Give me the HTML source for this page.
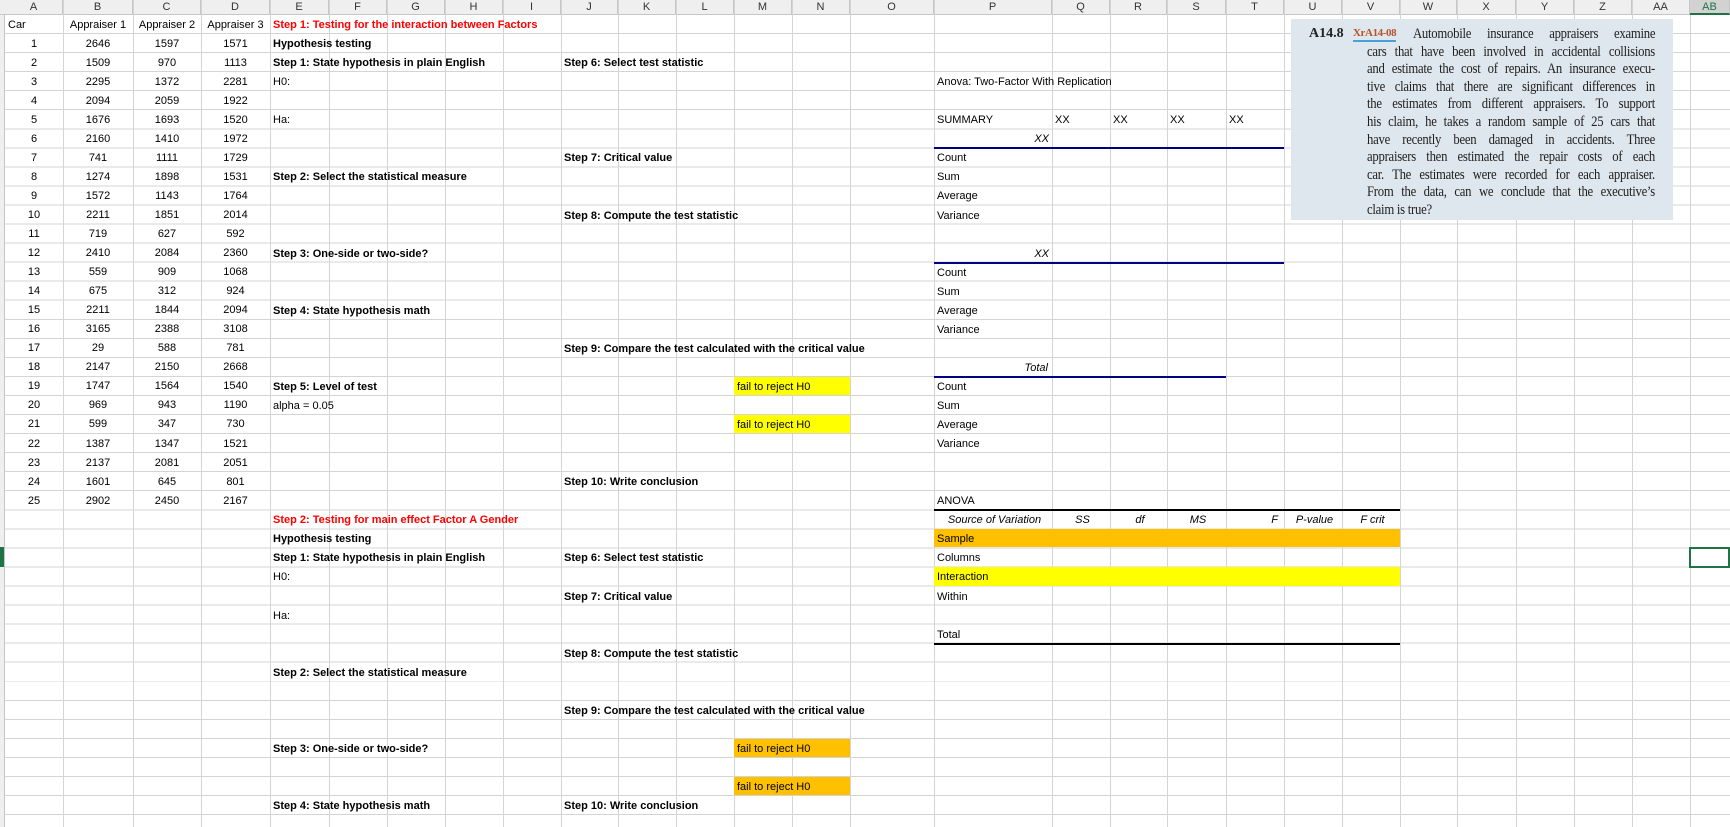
<!DOCTYPE html>
<html><head><meta charset="utf-8"><style>
*{margin:0;padding:0;box-sizing:border-box}
body{width:1730px;height:827px;overflow:hidden;background:#fff;position:relative;font-family:"Liberation Sans",sans-serif;font-size:11px;color:#000}
.hl{position:absolute;left:0;width:1730px;top:15px;height:812px;background:repeating-linear-gradient(to bottom,transparent 0,transparent 18.05px,#d4d4d4 18.05px,#d4d4d4 19.05px)}
.v{position:absolute;top:0;width:1px;height:827px;background:#d4d4d4}
.hdr{position:absolute;top:0;left:0;width:1730px;height:15px;background:#efefef;border-bottom:1px solid #c6c6c6}
.h{position:absolute;top:0;height:15px;line-height:15px;text-align:center;font-size:11px;color:#333;border-right:1px solid #c6c6c6}
.c{position:absolute;height:19px;line-height:20px;padding-left:3px;white-space:nowrap;font-size:11px}
.b{font-weight:bold}
.r{color:#f00;font-weight:bold}
.n{position:absolute;height:19px;line-height:20px;text-align:center;font-size:11px}
.y{background:#ff0}
.o{background:#ffc000}
.i{font-style:italic}
.box{position:absolute;left:1291px;top:19px;width:382px;height:201px;background:#dfe7ee;font-family:"Liberation Serif",serif;font-size:15px;color:#222}
.ln{position:absolute;left:76px;width:340px;height:18px;line-height:18px;text-align:justify;text-align-last:justify;white-space:nowrap;letter-spacing:-0.3px;transform:scaleX(0.847);transform-origin:0 0}
</style></head><body>
<div class="hl"></div>
<div class="hdr"></div>
<div style="position:absolute;left:0;top:15px;width:5px;height:812px;background:#efefef;border-right:1px solid #c6c6c6"></div>
<div class="v" style="left:63px"></div><div class="v" style="left:133px"></div><div class="v" style="left:201px"></div><div class="v" style="left:270px"></div><div class="v" style="left:329px"></div><div class="v" style="left:387px"></div><div class="v" style="left:445px"></div><div class="v" style="left:503px"></div><div class="v" style="left:561px"></div><div class="v" style="left:618px"></div><div class="v" style="left:676px"></div><div class="v" style="left:734px"></div><div class="v" style="left:792px"></div><div class="v" style="left:850px"></div><div class="v" style="left:934px"></div><div class="v" style="left:1052px"></div><div class="v" style="left:1110px"></div><div class="v" style="left:1167px"></div><div class="v" style="left:1226px"></div><div class="v" style="left:1284px"></div><div class="v" style="left:1342px"></div><div class="v" style="left:1400px"></div><div class="v" style="left:1457px"></div><div class="v" style="left:1516px"></div><div class="v" style="left:1574px"></div><div class="v" style="left:1632px"></div><div class="v" style="left:1690px"></div>
<div class="h" style="left:5px;width:58px">A</div><div class="h" style="left:63px;width:70px">B</div><div class="h" style="left:133px;width:68px">C</div><div class="h" style="left:201px;width:69px">D</div><div class="h" style="left:270px;width:59px">E</div><div class="h" style="left:329px;width:58px">F</div><div class="h" style="left:387px;width:58px">G</div><div class="h" style="left:445px;width:58px">H</div><div class="h" style="left:503px;width:58px">I</div><div class="h" style="left:561px;width:57px">J</div><div class="h" style="left:618px;width:58px">K</div><div class="h" style="left:676px;width:58px">L</div><div class="h" style="left:734px;width:58px">M</div><div class="h" style="left:792px;width:58px">N</div><div class="h" style="left:850px;width:84px">O</div><div class="h" style="left:934px;width:118px">P</div><div class="h" style="left:1052px;width:58px">Q</div><div class="h" style="left:1110px;width:57px">R</div><div class="h" style="left:1167px;width:59px">S</div><div class="h" style="left:1226px;width:58px">T</div><div class="h" style="left:1284px;width:58px">U</div><div class="h" style="left:1342px;width:58px">V</div><div class="h" style="left:1400px;width:57px">W</div><div class="h" style="left:1457px;width:59px">X</div><div class="h" style="left:1516px;width:58px">Y</div><div class="h" style="left:1574px;width:58px">Z</div><div class="h" style="left:1632px;width:58px">AA</div><div class="h" style="left:1690px;width:40px;background:#d2d2d2;border-bottom:2px solid #217346;color:#217346">AB</div>

<div class="y" style="position:absolute;left:734px;top:377px;width:116px;height:18px"></div>
<div class="y" style="position:absolute;left:734px;top:415px;width:116px;height:18px"></div>
<div class="o" style="position:absolute;left:734px;top:739px;width:116px;height:18px"></div>
<div class="o" style="position:absolute;left:734px;top:777px;width:116px;height:18px"></div>
<div class="o" style="position:absolute;left:934px;top:529px;width:466px;height:18px"></div>
<div class="y" style="position:absolute;left:934px;top:567px;width:466px;height:19px"></div>

<div style="position:absolute;left:934px;top:147px;width:350px;height:2px;background:#000080"></div>
<div style="position:absolute;left:934px;top:262px;width:350px;height:2px;background:#000080"></div>
<div style="position:absolute;left:934px;top:376px;width:292px;height:2px;background:#000080"></div>
<div style="position:absolute;left:934px;top:509px;width:466px;height:2px;background:#000"></div>
<div style="position:absolute;left:934px;top:643px;width:466px;height:2px;background:#000"></div>
<div style="position:absolute;left:1689px;top:547px;width:41px;height:21px;border:2px solid #217346"></div>
<div style="position:absolute;left:0;top:547px;width:4px;height:20px;background:#217346"></div>

<div class="c" style="left:5px;top:15px">Car</div>
<div class="n" style="left:63px;top:15px;width:70px">Appraiser 1</div>
<div class="n" style="left:133px;top:15px;width:68px">Appraiser 2</div>
<div class="n" style="left:201px;top:15px;width:69px">Appraiser 3</div>
<div style="position:absolute;left:5px;top:34px">
<table style="border-collapse:collapse;font-size:11px;text-align:center">
<colgroup><col style="width:58px"><col style="width:70px"><col style="width:68px"><col style="width:69px"></colgroup>
<tr style="height:19.05px"><td>1</td><td>2646</td><td>1597</td><td>1571</td></tr>
<tr style="height:19.05px"><td>2</td><td>1509</td><td>970</td><td>1113</td></tr>
<tr style="height:19.05px"><td>3</td><td>2295</td><td>1372</td><td>2281</td></tr>
<tr style="height:19.05px"><td>4</td><td>2094</td><td>2059</td><td>1922</td></tr>
<tr style="height:19.05px"><td>5</td><td>1676</td><td>1693</td><td>1520</td></tr>
<tr style="height:19.05px"><td>6</td><td>2160</td><td>1410</td><td>1972</td></tr>
<tr style="height:19.05px"><td>7</td><td>741</td><td>1111</td><td>1729</td></tr>
<tr style="height:19.05px"><td>8</td><td>1274</td><td>1898</td><td>1531</td></tr>
<tr style="height:19.05px"><td>9</td><td>1572</td><td>1143</td><td>1764</td></tr>
<tr style="height:19.05px"><td>10</td><td>2211</td><td>1851</td><td>2014</td></tr>
<tr style="height:19.05px"><td>11</td><td>719</td><td>627</td><td>592</td></tr>
<tr style="height:19.05px"><td>12</td><td>2410</td><td>2084</td><td>2360</td></tr>
<tr style="height:19.05px"><td>13</td><td>559</td><td>909</td><td>1068</td></tr>
<tr style="height:19.05px"><td>14</td><td>675</td><td>312</td><td>924</td></tr>
<tr style="height:19.05px"><td>15</td><td>2211</td><td>1844</td><td>2094</td></tr>
<tr style="height:19.05px"><td>16</td><td>3165</td><td>2388</td><td>3108</td></tr>
<tr style="height:19.05px"><td>17</td><td>29</td><td>588</td><td>781</td></tr>
<tr style="height:19.05px"><td>18</td><td>2147</td><td>2150</td><td>2668</td></tr>
<tr style="height:19.05px"><td>19</td><td>1747</td><td>1564</td><td>1540</td></tr>
<tr style="height:19.05px"><td>20</td><td>969</td><td>943</td><td>1190</td></tr>
<tr style="height:19.05px"><td>21</td><td>599</td><td>347</td><td>730</td></tr>
<tr style="height:19.05px"><td>22</td><td>1387</td><td>1347</td><td>1521</td></tr>
<tr style="height:19.05px"><td>23</td><td>2137</td><td>2081</td><td>2051</td></tr>
<tr style="height:19.05px"><td>24</td><td>1601</td><td>645</td><td>801</td></tr>
<tr style="height:19.05px"><td>25</td><td>2902</td><td>2450</td><td>2167</td></tr>
</table></div>

<div class="c r" style="left:270px;top:15px">Step 1: Testing for the interaction between Factors</div>
<div class="c b" style="left:270px;top:34px">Hypothesis testing</div>
<div class="c b" style="left:270px;top:53px">Step 1: State hypothesis in plain English</div>
<div class="c" style="left:270px;top:72px">H0:</div>
<div class="c" style="left:270px;top:110px">Ha:</div>
<div class="c b" style="left:270px;top:167px">Step 2: Select the statistical measure</div>
<div class="c b" style="left:270px;top:244px">Step 3: One-side or two-side?</div>
<div class="c b" style="left:270px;top:301px">Step 4: State hypothesis math</div>
<div class="c b" style="left:270px;top:377px">Step 5: Level of test</div>
<div class="c" style="left:270px;top:396px">alpha = 0.05</div>
<div class="c r" style="left:270px;top:510px">Step 2: Testing for main effect Factor A Gender</div>
<div class="c b" style="left:270px;top:529px">Hypothesis testing</div>
<div class="c b" style="left:270px;top:548px">Step 1: State hypothesis in plain English</div>
<div class="c" style="left:270px;top:567px">H0:</div>
<div class="c" style="left:270px;top:606px">Ha:</div>
<div class="c b" style="left:270px;top:663px">Step 2: Select the statistical measure</div>
<div class="c b" style="left:270px;top:739px">Step 3: One-side or two-side?</div>
<div class="c b" style="left:270px;top:796px">Step 4: State hypothesis math</div>

<div class="c b" style="left:561px;top:53px">Step 6: Select test statistic</div>
<div class="c b" style="left:561px;top:148px">Step 7: Critical value</div>
<div class="c b" style="left:561px;top:206px">Step 8: Compute the test statistic</div>
<div class="c b" style="left:561px;top:339px">Step 9: Compare the test calculated with the critical value</div>
<div class="c b" style="left:561px;top:472px">Step 10: Write conclusion</div>
<div class="c b" style="left:561px;top:548px">Step 6: Select test statistic</div>
<div class="c b" style="left:561px;top:587px">Step 7: Critical value</div>
<div class="c b" style="left:561px;top:644px">Step 8: Compute the test statistic</div>
<div class="c b" style="left:561px;top:701px">Step 9: Compare the test calculated with the critical value</div>
<div class="c b" style="left:561px;top:796px">Step 10: Write conclusion</div>

<div class="c" style="left:734px;top:377px">fail to reject H0</div>
<div class="c" style="left:734px;top:415px">fail to reject H0</div>
<div class="c" style="left:734px;top:739px">fail to reject H0</div>
<div class="c" style="left:734px;top:777px">fail to reject H0</div>

<div class="c" style="left:934px;top:72px">Anova: Two-Factor With Replication</div>
<div class="c" style="left:934px;top:110px">SUMMARY</div>
<div class="c" style="left:1052px;top:110px">XX</div><div class="c" style="left:1110px;top:110px">XX</div><div class="c" style="left:1167px;top:110px">XX</div><div class="c" style="left:1226px;top:110px">XX</div>
<div class="c i" style="left:934px;top:129px;width:118px;text-align:right;padding-right:3px">XX</div>
<div class="c" style="left:934px;top:148px">Count</div>
<div class="c" style="left:934px;top:167px">Sum</div>
<div class="c" style="left:934px;top:186px">Average</div>
<div class="c" style="left:934px;top:206px">Variance</div>
<div class="c i" style="left:934px;top:244px;width:118px;text-align:right;padding-right:3px">XX</div>
<div class="c" style="left:934px;top:263px">Count</div>
<div class="c" style="left:934px;top:282px">Sum</div>
<div class="c" style="left:934px;top:301px">Average</div>
<div class="c" style="left:934px;top:320px">Variance</div>
<div class="c i" style="left:934px;top:358px;width:118px;text-align:right;padding-right:4px">Total</div>
<div class="c" style="left:934px;top:377px">Count</div>
<div class="c" style="left:934px;top:396px">Sum</div>
<div class="c" style="left:934px;top:415px">Average</div>
<div class="c" style="left:934px;top:434px">Variance</div>
<div class="c" style="left:934px;top:491px">ANOVA</div>
<div class="c i" style="left:934px;top:510px;width:118px;text-align:center">Source of Variation</div>
<div class="c i" style="left:1052px;top:510px;width:58px;text-align:center">SS</div>
<div class="c i" style="left:1110px;top:510px;width:57px;text-align:center">df</div>
<div class="c i" style="left:1167px;top:510px;width:59px;text-align:center">MS</div>
<div class="c i" style="left:1226px;top:510px;width:58px;text-align:right;padding-right:6px">F</div>
<div class="c i" style="left:1284px;top:510px;width:58px;text-align:center">P-value</div>
<div class="c i" style="left:1342px;top:510px;width:58px;text-align:center">F crit</div>
<div class="c" style="left:934px;top:529px">Sample</div>
<div class="c" style="left:934px;top:548px">Columns</div>
<div class="c" style="left:934px;top:567px">Interaction</div>
<div class="c" style="left:934px;top:587px">Within</div>
<div class="c" style="left:934px;top:625px">Total</div>

<div class="box">
<div style="position:absolute;left:18px;top:6px;line-height:18px;font-weight:bold;font-size:14px">A14.8</div>
<div style="position:absolute;left:62px;top:7px;line-height:14px;font-size:11px;font-weight:bold;color:#b5532a;border-bottom:2px solid #4aa0d8;letter-spacing:-0.4px">XrA14-08</div>
<div class="ln" style="left:122px;width:286px;top:6px">Automobile insurance appraisers examine</div>
<div class="ln" style="top:23.6px">cars that have been involved in accidental collisions</div>
<div class="ln" style="top:41.2px">and estimate the cost of repairs. An insurance execu-</div>
<div class="ln" style="top:58.8px">tive claims that there are significant differences in</div>
<div class="ln" style="top:76.4px">the estimates from different appraisers. To support</div>
<div class="ln" style="top:94px">his claim, he takes a random sample of 25 cars that</div>
<div class="ln" style="top:111.6px">have recently been damaged in accidents. Three</div>
<div class="ln" style="top:129.2px">appraisers then estimated the repair costs of each</div>
<div class="ln" style="top:146.8px">car. The estimates were recorded for each appraiser.</div>
<div class="ln" style="top:164.4px">From the data, can we conclude that the executive’s</div>
<div class="ln" style="top:182px;text-align-last:left">claim is true?</div>
</div>
</body></html>
